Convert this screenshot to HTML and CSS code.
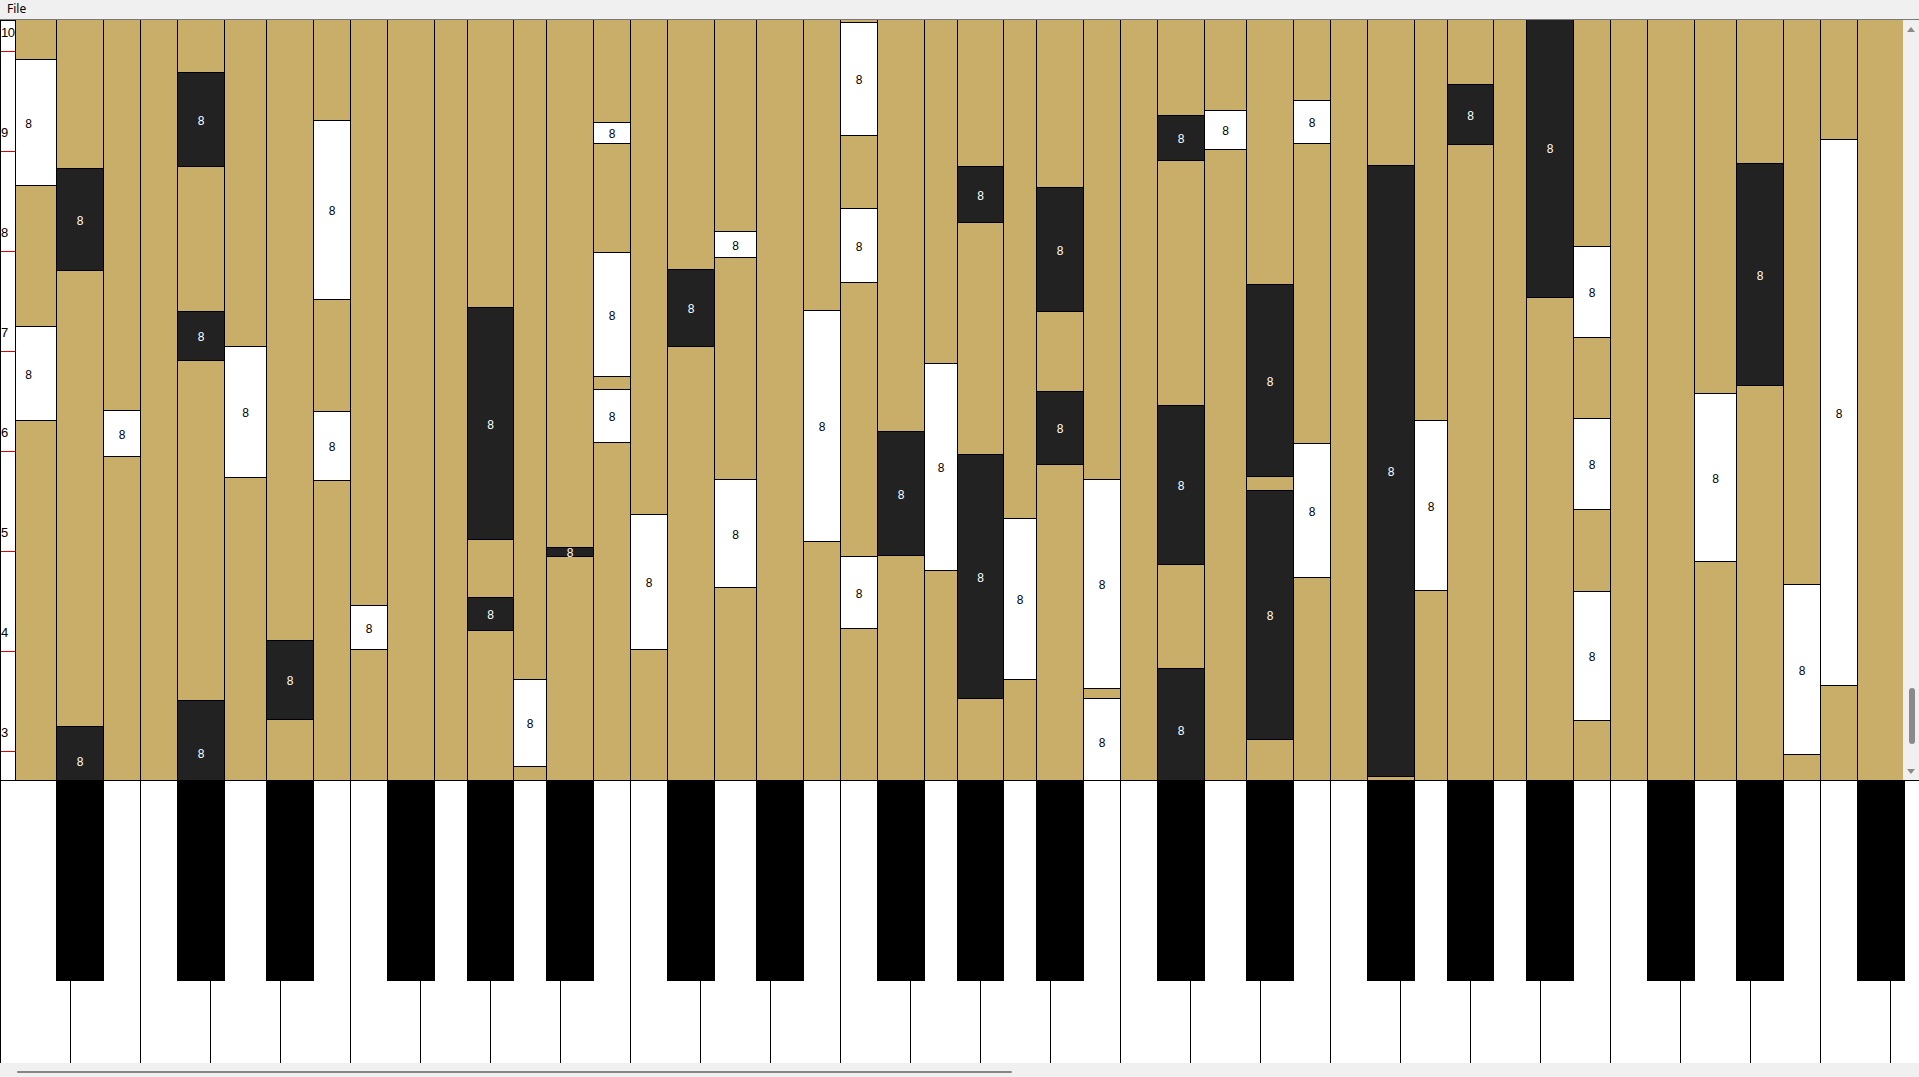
FILE: index.html
```html
<!DOCTYPE html>
<html>
<head>
<meta charset="utf-8">
<title>Piano Roll</title>
<link rel="stylesheet" href="styles.css">
</head>
<body>
<div class="menubar"><span class="menu-item">File</span></div>
<div class="main">
  <div class="ruler">
    <div class="tick">10</div>
    <div class="tick">9</div>
    <div class="tick">8</div>
    <div class="tick">7</div>
    <div class="tick">6</div>
    <div class="tick">5</div>
    <div class="tick">4</div>
    <div class="tick">3</div>
  </div>
  <div class="roll">
    <div class="col c-a0">
      <div class="note w ext" style="top:39px;height:127px">8</div>
      <div class="note w ext" style="top:306px;height:95px">8</div>
    </div>
    <div class="col c-as">
      <div class="note d" style="top:148px;height:103px">8</div>
      <div class="note d" style="top:706px;height:69px">8</div>
    </div>
    <div class="col c-b">
      <div class="note w" style="top:390px;height:47px">8</div>
    </div>
    <div class="col c-c"></div>
    <div class="col c-cs">
      <div class="note d" style="top:52px;height:95px">8</div>
      <div class="note d" style="top:291px;height:50px">8</div>
      <div class="note d" style="top:680px;height:105px">8</div>
    </div>
    <div class="col c-d">
      <div class="note w" style="top:326px;height:132px">8</div>
    </div>
    <div class="col c-ds">
      <div class="note d" style="top:620px;height:80px">8</div>
    </div>
    <div class="col c-e">
      <div class="note w" style="top:100px;height:180px">8</div>
      <div class="note w" style="top:391px;height:70px">8</div>
    </div>
    <div class="col c-f">
      <div class="note w" style="top:585px;height:45px">8</div>
    </div>
    <div class="col c-fs"></div>
    <div class="col c-g"></div>
    <div class="col c-gs">
      <div class="note d" style="top:287px;height:233px">8</div>
      <div class="note d" style="top:577px;height:34px">8</div>
    </div>
    <div class="col c-a">
      <div class="note w" style="top:659px;height:88px">8</div>
    </div>
    <div class="col c-as">
      <div class="note d" style="top:527px;height:10px">8</div>
    </div>
    <div class="col c-b">
      <div class="note w" style="top:102px;height:22px">8</div>
      <div class="note w" style="top:232px;height:125px">8</div>
      <div class="note w" style="top:369px;height:54px">8</div>
    </div>

    <div class="col c-c">
      <div class="note w" style="top:494px;height:136px">8</div>
    </div>
    <div class="col c-cs">
      <div class="note d" style="top:249px;height:78px">8</div>
    </div>
    <div class="col c-d">
      <div class="note w" style="top:211px;height:27px">8</div>
      <div class="note w" style="top:459px;height:109px">8</div>
    </div>
    <div class="col c-ds"></div>
    <div class="col c-e">
      <div class="note w" style="top:290px;height:232px">8</div>
    </div>
    <div class="col c-f">
      <div class="note w" style="top:2px;height:114px">8</div>
      <div class="note w" style="top:188px;height:75px">8</div>
      <div class="note w" style="top:536px;height:73px">8</div>
    </div>
    <div class="col c-fs">
      <div class="note d" style="top:411px;height:125px">8</div>
    </div>
    <div class="col c-g">
      <div class="note w" style="top:343px;height:208px">8</div>
    </div>
    <div class="col c-gs">
      <div class="note d" style="top:146px;height:57px">8</div>
      <div class="note d" style="top:434px;height:245px">8</div>
    </div>
    <div class="col c-a">
      <div class="note w" style="top:498px;height:162px">8</div>
    </div>
    <div class="col c-as">
      <div class="note d" style="top:167px;height:125px">8</div>
      <div class="note d" style="top:371px;height:74px">8</div>
    </div>
    <div class="col c-b">
      <div class="note w" style="top:459px;height:210px">8</div>
      <div class="note w" style="top:678px;height:87px">8</div>
    </div>

    <div class="col c-c"></div>
    <div class="col c-cs">
      <div class="note d" style="top:95px;height:46px">8</div>
      <div class="note d" style="top:385px;height:160px">8</div>
      <div class="note d" style="top:648px;height:124px">8</div>
    </div>
    <div class="col c-d">
      <div class="note w" style="top:90px;height:40px">8</div>
    </div>
    <div class="col c-ds">
      <div class="note d" style="top:264px;height:193px">8</div>
      <div class="note d" style="top:470px;height:250px">8</div>
    </div>
    <div class="col c-e">
      <div class="note w" style="top:80px;height:44px">8</div>
      <div class="note w" style="top:423px;height:135px">8</div>
    </div>
    <div class="col c-f"></div>
    <div class="col c-fs">
      <div class="note d" style="top:145px;height:612px">8</div>
    </div>
    <div class="col c-g">
      <div class="note w" style="top:400px;height:171px">8</div>
    </div>
    <div class="col c-gs">
      <div class="note d" style="top:64px;height:61px">8</div>
    </div>
    <div class="col c-a"></div>
    <div class="col c-as">
      <div class="note d" style="top:-22px;height:300px">8</div>
    </div>
    <div class="col c-b">
      <div class="note w" style="top:226px;height:92px">8</div>
      <div class="note w" style="top:398px;height:92px">8</div>
      <div class="note w" style="top:571px;height:130px">8</div>
    </div>

    <div class="col c-c"></div>
    <div class="col c-cs"></div>
    <div class="col c-d">
      <div class="note w" style="top:373px;height:169px">8</div>
    </div>
    <div class="col c-ds">
      <div class="note d" style="top:143px;height:223px">8</div>
    </div>
    <div class="col c-e">
      <div class="note w" style="top:564px;height:171px">8</div>
    </div>
    <div class="col c-f">
      <div class="note w" style="top:119px;height:547px">8</div>
    </div>
    <div class="col c-fs-end"></div>
  </div>
  <div class="vscroll">
    <div class="arrow-box"><span class="arrow-up"></span></div>
    <div class="track"><div class="vthumb"></div></div>
    <div class="arrow-box"><span class="arrow-down"></span></div>
  </div>
</div>
<div class="keyboard">
  <div class="wk"><div class="bk r"></div></div>
  <div class="wk"></div>
  <div class="wk"><div class="bk l"></div></div>
  <div class="wk"><div class="bk r"></div></div>
  <div class="wk"></div>
  <div class="wk"><div class="bk l"></div></div>
  <div class="wk"><div class="bk m"></div></div>
  <div class="wk"><div class="bk r"></div></div>
  <div class="wk"></div>
  <div class="wk"><div class="bk l"></div></div>
  <div class="wk"><div class="bk r"></div></div>
  <div class="wk"></div>
  <div class="wk"><div class="bk l"></div></div>
  <div class="wk"><div class="bk m"></div></div>
  <div class="wk"><div class="bk r"></div></div>
  <div class="wk"></div>
  <div class="wk"><div class="bk l"></div></div>
  <div class="wk"><div class="bk r"></div></div>
  <div class="wk"></div>
  <div class="wk"><div class="bk l"></div></div>
  <div class="wk"><div class="bk m"></div></div>
  <div class="wk"><div class="bk r"></div></div>
  <div class="wk"></div>
  <div class="wk"><div class="bk l"></div></div>
  <div class="wk"><div class="bk r"></div></div>
  <div class="wk"></div>
  <div class="wk"><div class="bk l"></div></div>
  <div class="wk"><div class="bk m"></div></div>
</div>
<div class="hscroll"><div class="hthumb"></div></div>
</body>
</html>
```

FILE: styles.css
```css
* {
  box-sizing: border-box;
}

html, body {
  margin: 0;
  padding: 0;
  width: 1919px;
  height: 1077px;
  overflow: hidden;
  background: #ffffff;
  font-family: "Liberation Sans", Arial, sans-serif;
}

/* menu bar */
.menubar {
  height: 20px;
  background: #f0f0f0;
  border-bottom: 1px solid #7a7a7a;
  padding-left: 7px;
  font-family: "Noto Sans", "Liberation Sans", sans-serif;
  font-size: 12px;
  line-height: 18px;
  color: #000000;
}

.menu-item {
  display: inline-block;
}

/* main area: ruler + roll + vertical scrollbar */
.main {
  display: flex;
  height: 760px;
  overflow: hidden;
}

.ruler {
  flex: none;
  position: relative;
  z-index: 2;
  width: 16px;
  background: #ffffff;
  border-left: 1px solid #000000;
  border-right: 1px solid #000000;
  border-top: 1px solid #000000;
  overflow: hidden;
  display: flex;
  flex-direction: column;
}

.tick {
  flex: none;
  height: 100px;
  border-bottom: 1px solid #e00000;
  display: flex;
  align-items: flex-end;
  padding: 0 0 11px 0;
  font-size: 13px;
  line-height: 14px;
  letter-spacing: -0.4px;
  white-space: nowrap;
  color: #000000;
}

.tick:first-child {
  margin-top: -69px;
}

.roll {
  flex: none;
  width: 1887px;
  display: flex;
  background: #c8ae69;
  overflow: hidden;
}

.col {
  flex: none;
  position: relative;
  height: 100%;
  border-left: 1px solid #000000;
}

.c-a0 { width: 40px; border-left: 0; }
.c-c, .c-e, .c-f, .c-b { width: 37px; }
.c-cs, .c-ds, .c-fs, .c-as { width: 47px; }
.c-d { width: 42px; }
.c-g, .c-a { width: 33px; }
.c-gs { width: 46px; }
.c-fs-end { width: 46px; }

.note {
  position: absolute;
  left: -1px;
  right: -1px;
  border: 1px solid #000000;
  display: flex;
  align-items: center;
  justify-content: center;
  padding-top: 2px;
  font-size: 12px;
  line-height: 12px;
}

.note.ext {
  left: -16px;
}

.note.w {
  background: #ffffff;
  color: #000000;
}

.note.d {
  background: #222222;
  color: #ffffff;
}

/* vertical scrollbar */
.vscroll {
  flex: none;
  width: 16px;
  background: #f0f0f0;
  display: flex;
  flex-direction: column;
}

.arrow-box {
  flex: none;
  height: 18px;
  display: flex;
  align-items: center;
  justify-content: center;
}

.arrow-up {
  width: 0;
  height: 0;
  border-left: 4px solid transparent;
  border-right: 4px solid transparent;
  border-bottom: 5px solid #8a8a8a;
}

.arrow-down {
  width: 0;
  height: 0;
  border-left: 4px solid transparent;
  border-right: 4px solid transparent;
  border-top: 5px solid #8a8a8a;
}

.track {
  flex: 1;
}

.vthumb {
  margin-top: 650px;
  margin-left: 6px;
  width: 6px;
  height: 56px;
  border-radius: 3px;
  background: #8a8a8a;
}

/* keyboard */
.keyboard {
  display: flex;
  height: 283px;
  border-top: 1px solid #000000;
  overflow: hidden;
}

.wk {
  flex: none;
  position: relative;
  width: 70px;
  height: 100%;
  background: #ffffff;
  border-left: 1px solid #000000;
}

.bk {
  position: absolute;
  top: 0;
  width: 48px;
  height: 200px;
  background: #000000;
  z-index: 1;
}

.bk.l { left: 36px; }
.bk.r { left: 55px; }
.bk.m { left: 46px; width: 47px; }

/* horizontal scrollbar */
.hscroll {
  height: 14px;
  background: #f0f0f0;
  padding-top: 8px;
}

.hthumb {
  margin-left: 17px;
  width: 995px;
  height: 2px;
  border-radius: 1px;
  background: #858585;
}
```
